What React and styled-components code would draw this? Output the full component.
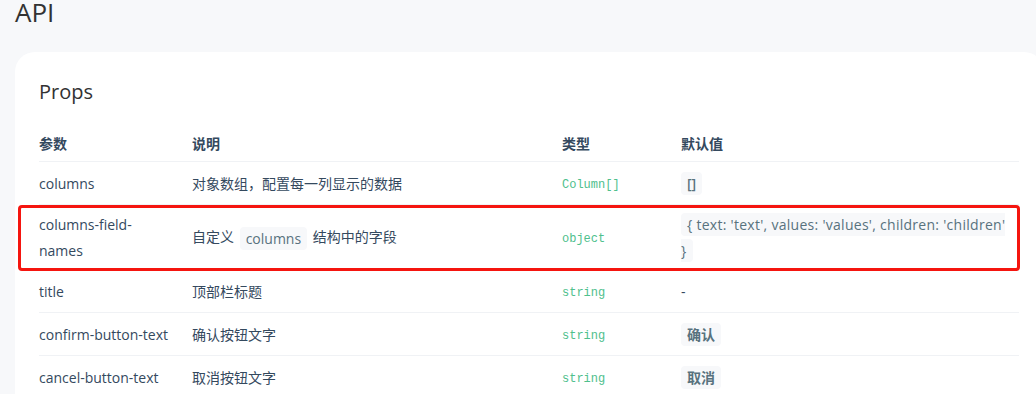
import styled, { createGlobalStyle } from 'styled-components';

const GlobalStyle = createGlobalStyle`
  * {
    box-sizing: border-box;
  }

  body {
    margin: 0;
    overflow: hidden;
    background: #f7f8fa;
    font-family: 'Open Sans', 'Noto Sans CJK SC', sans-serif;
    -webkit-font-smoothing: antialiased;
  }
`;

const Page = styled.div`
  width: 1060px;
  margin-top: -1px;
  padding-left: 15px;
`;

const Title = styled.h2`
  margin: 0 0 27px 0;
  font-size: 26px;
  line-height: 26px;
  font-weight: 400;
  color: #323233;
`;

const Card = styled.section`
  width: 1029px;
  padding: 26px 24px 24px;
  background: #fff;
  border-radius: 20px;

  h3 {
    margin: 0;
    font-size: 20px;
    line-height: 28px;
    font-weight: 500;
    color: #323233;
  }
`;

const Table = styled.table`
  width: 980px;
  margin-top: 17px;
  table-layout: fixed;
  border-collapse: collapse;
  font-size: 14px;
  line-height: 26px;
  color: #34495e;
`;

const Th = styled.th`
  width: ${(p) => p.$w}px;
  padding: 8px ${(p) => p.$pr || 8}px 4px 0;
  text-align: left;
  font-weight: 600;
`;

const Row = styled.tr`
  position: relative;

  ${(p) =>
    p.$highlight &&
    `
    &::after {
      content: '';
      position: absolute;
      top: 0;
      bottom: 0;
      left: -21px;
      right: -1px;
      border: 3px solid #f5150f;
      border-radius: 4px;
      pointer-events: none;
    }
  `}
`;

const Td = styled.td`
  padding: 7px ${(p) => p.$pr || 8}px 6px 0;
  border-top: 1px solid #f0f2f5;
  vertical-align: middle;
  word-break: break-word;
`;

const Code = styled.code`
  display: inline-block;
  margin: 3px 2px;
  margin-left: ${(p) => (p.$flush ? 0 : 2)}px;
  padding: 2px 6px;
  line-height: 19px;
  font-family: 'Open Sans', 'Noto Sans CJK SC', sans-serif;
  font-size: 14px;
  font-weight: ${(p) => (p.$bold ? 600 : 400)};
  color: #58727e;
  background: #f7f8fa;
  border-radius: 4px;
  vertical-align: middle;
`;

const WrapCode = styled.code`
  padding: 2px 6px;
  font-family: 'Open Sans', 'Noto Sans CJK SC', sans-serif;
  font-size: 14px;
  letter-spacing: 0.28px;
  color: #58727e;
  background: #f7f8fa;
  border-radius: 4px;
`;

const Type = styled.em`
  font-family: 'Liberation Mono', 'DejaVu Sans Mono', monospace;
  font-size: 12px;
  font-style: normal;
  color: #4fc08d;
`;

// keep the object on one line until the closing brace
const fieldNames = "{ text: 'text', values: 'values', children: 'children'".replace(/ /g, '\u00a0') + ' }';

const props = [
  { name: 'columns', desc: '对象数组，配置每一列显示的数据', type: 'Column[]', def: <Code $bold $flush>[]</Code> },
  {
    name: 'columns-field-names',
    desc: (
      <>
        自定义 <Code>columns</Code> 结构中的字段
      </>
    ),
    type: 'object',
    def: <WrapCode>{fieldNames}</WrapCode>,
    highlight: true
  },
  { name: 'title', desc: '顶部栏标题', type: 'string', def: '-' },
  { name: 'confirm-button-text', desc: '确认按钮文字', type: 'string', def: <Code $bold $flush>确认</Code> },
  { name: 'cancel-button-text', desc: '取消按钮文字', type: 'string', def: <Code $bold $flush>取消</Code> }
];

export default function App() {
  return (
    <>
      <GlobalStyle />
      <Page>
        <Title>API</Title>
        <Card>
          <h3>Props</h3>
          <Table>
            <thead>
              <tr>
                <Th $w={153} $pr={21}>参数</Th>
                <Th $w={370}>说明</Th>
                <Th $w={119}>类型</Th>
                <Th $w={338}>默认值</Th>
              </tr>
            </thead>
            <tbody>
              {props.map((item) => (
                <Row key={item.name} $highlight={item.highlight}>
                  <Td $pr={21}>{item.name}</Td>
                  <Td>{item.desc}</Td>
                  <Td>
                    <Type>{item.type}</Type>
                  </Td>
                  <Td>{item.def}</Td>
                </Row>
              ))}
            </tbody>
          </Table>
        </Card>
      </Page>
    </>
  );
}
